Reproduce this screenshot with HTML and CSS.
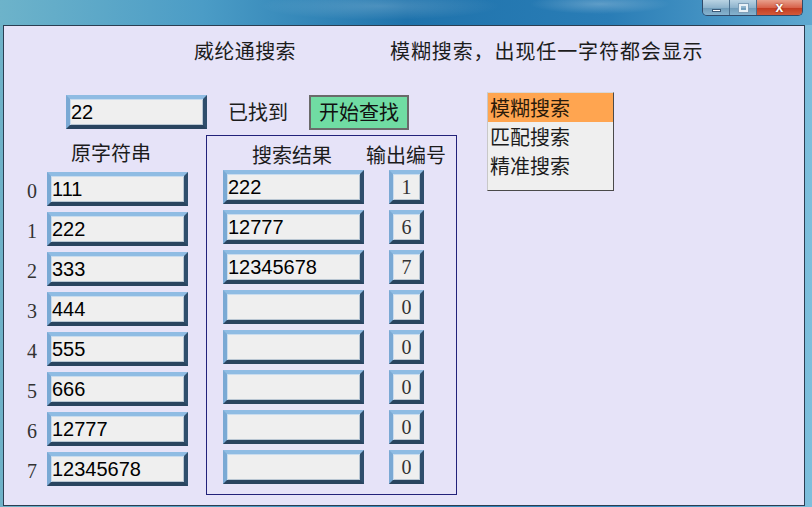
FILE: index.html
```html
<!DOCTYPE html>
<html lang="zh-CN">
<head>
<meta charset="utf-8">
<title>威纶通搜索</title>
<link rel="stylesheet" href="styles.css">
</head>
<body>
<div class="window">
  <div class="titlebar">
    <div class="caption-buttons">
      <span class="cb cb-min"><span class="min-glyph"></span></span>
      <span class="cb cb-max"><span class="max-glyph"></span></span>
      <span class="cb cb-close">x</span>
    </div>
  </div>
  <div class="frame">
    <div class="client">
      <div class="header">
        <span class="title">威纶通搜索</span>
        <span class="hint">模糊搜索，出现任一字符都会显示</span>
      </div>
      <div class="main">
        <div class="left">
          <div class="search-row">
            <div class="bevel field search-field">22</div>
            <span class="found">已找到</span>
            <div class="start-btn">开始查找</div>
          </div>
          <div class="tables">
            <div class="orig">
              <div class="col-head">原字符串</div>
              <div class="orig-rows">
                <div class="orig-row"><span class="idx">0</span><div class="bevel field">111</div></div>
                <div class="orig-row"><span class="idx">1</span><div class="bevel field">222</div></div>
                <div class="orig-row"><span class="idx">2</span><div class="bevel field">333</div></div>
                <div class="orig-row"><span class="idx">3</span><div class="bevel field">444</div></div>
                <div class="orig-row"><span class="idx">4</span><div class="bevel field">555</div></div>
                <div class="orig-row"><span class="idx">5</span><div class="bevel field">666</div></div>
                <div class="orig-row"><span class="idx">6</span><div class="bevel field">12777</div></div>
                <div class="orig-row"><span class="idx">7</span><div class="bevel field">12345678</div></div>
              </div>
            </div>
            <div class="results">
              <div class="res-head"><span class="rh1">搜索结果</span><span class="rh2">输出编号</span></div>
              <div class="res-rows">
                <div class="res-row"><div class="bevel field">222</div><div class="bevel num">1</div></div>
                <div class="res-row"><div class="bevel field">12777</div><div class="bevel num">6</div></div>
                <div class="res-row"><div class="bevel field">12345678</div><div class="bevel num">7</div></div>
                <div class="res-row"><div class="bevel field"></div><div class="bevel num">0</div></div>
                <div class="res-row"><div class="bevel field"></div><div class="bevel num">0</div></div>
                <div class="res-row"><div class="bevel field"></div><div class="bevel num">0</div></div>
                <div class="res-row"><div class="bevel field"></div><div class="bevel num">0</div></div>
                <div class="res-row"><div class="bevel field"></div><div class="bevel num">0</div></div>
              </div>
            </div>
          </div>
        </div>
        <div class="listbox">
          <div class="item selected">模糊搜索</div>
          <div class="item">匹配搜索</div>
          <div class="item">精准搜索</div>
        </div>
      </div>
    </div>
  </div>
</div>
</body>
</html>
```

FILE: styles.css
```css
* { box-sizing: border-box; }
html, body { margin: 0; padding: 0; }
body {
  width: 812px;
  height: 507px;
  overflow: hidden;
  font-family: "Noto Sans CJK SC", "Liberation Sans", sans-serif;
  background: #5aa3cc;
}
.window {
  width: 812px;
  height: 507px;
  display: flex;
  flex-direction: column;
  background: linear-gradient(90deg, #6fb2c8 0%, #4e9cc4 30%, #2c7fb5 55%, #3b8cc0 80%, #7ebfdc 100%);
}
.titlebar {
  height: 25px;
  flex: none;
  display: flex;
  justify-content: flex-end;
  align-items: flex-start;
  padding-right: 9px;
  background:
    radial-gradient(ellipse 120px 14px at 380px 6px, rgba(255,255,255,0.18), transparent),
    radial-gradient(ellipse 70px 10px at 600px 4px, rgba(255,255,255,0.25), transparent),
    linear-gradient(90deg, #6db3ca 0%, #4b9cc6 25%, #1f73ac 50%, #2a7db6 75%, #5ea8d0 100%);
}
.caption-buttons {
  display: flex;
  height: 16px;
  border: 1px solid #2f4a6a;
  border-top: none;
  border-radius: 0 0 5px 5px;
  overflow: hidden;
}
.cb {
  display: flex;
  align-items: center;
  justify-content: center;
  height: 15px;
}
.cb-min, .cb-max {
  width: 27px;
  background: linear-gradient(180deg, #b9d3e3 0%, #8fb4cd 50%, #6f9bb9 51%, #86b3cf 100%);
  border-right: 1px solid #4b6f8e;
}
.min-glyph {
  width: 9px;
  height: 3px;
  margin-top: 5px;
  background: #fff;
  border: 1px solid #3b5a78;
}
.max-glyph {
  width: 9px;
  height: 8px;
  border: 2px solid #e8f1f7;
  outline: 1px solid #7f9fb8;
}
.cb-close {
  width: 45px;
  background: linear-gradient(180deg, #e8a08c 0%, #d8644c 50%, #c23a20 51%, #d35a3a 100%);
  color: #fff;
  font-family: "Liberation Sans", sans-serif;
  font-weight: bold;
  font-size: 14px;
  line-height: 15px;
  text-shadow: 0 0 2px #6a1a0a;
}
.frame {
  flex: 1;
  display: flex;
  padding: 0 7px 1px 3px;
}
.client {
  flex: 1;
  border: 1px solid #2c3e52;
  background: #e6e3f8;
  display: flex;
  flex-direction: column;
  color: #1c1c1c;
}
.header {
  padding: 13px 0 0 190px;
  display: flex;
  font-size: 20px;
  line-height: 24px;
  height: 37px;
}
.title { letter-spacing: 0.4px; }
.hint { margin-left: 94px; letter-spacing: 0.9px; }
.main {
  margin-top: 29px;
  display: flex;
}
.left { width: 466px; }
.search-row {
  margin-top: 2px;
  height: 36px;
  display: flex;
  align-items: center;
}
.bevel {
  background: #efefef;
  border-style: solid;
  border-width: 4px;
  border-color: #8fbce3 #2f4e6c #29445f #7aa9d4;
  box-shadow: inset 1px 1px 0 #c9dcee, inset -1px -1px 0 #b9c6d2;
}
.field {
  width: 141px;
  height: 34px;
  padding-left: 1px;
  font-family: "Liberation Sans", Arial, sans-serif;
  font-size: 20px;
  line-height: 26px;
  color: #000;
}
.search-field { margin-left: 62px; }
.found {
  margin-left: 21px;
  font-size: 20px;
  line-height: 24px;
}
.start-btn {
  margin-left: 21px;
  width: 100px;
  height: 35px;
  background: #70dca3;
  border: 2px solid #6a6a6a;
  font-size: 20px;
  line-height: 30px;
  text-align: center;
  color: #111;
}
.tables {
  margin-top: 5px;
  display: flex;
}
.orig { width: 202px; }
.col-head {
  padding: 6px 0 0 67px;
  font-size: 20px;
  line-height: 24px;
}
.orig-rows {
  margin-top: 7px;
  display: flex;
  flex-direction: column;
  gap: 6px;
}
.orig-row {
  display: flex;
  align-items: center;
  padding-left: 23px;
}
.idx {
  width: 20px;
  font-family: "Liberation Serif", serif;
  font-size: 20px;
  color: #333;
  padding-top: 4px;
}
.results {
  width: 251px;
  height: 360px;
  border: 1px solid #22227a;
}
.res-head {
  padding-top: 7px;
  display: flex;
  font-size: 20px;
  line-height: 24px;
}
.rh1 { margin-left: 45px; }
.rh2 { margin-left: 34px; }
.res-rows {
  margin-top: 3px;
  display: flex;
  flex-direction: column;
  gap: 6px;
}
.res-row {
  display: flex;
  padding-left: 16px;
}
.num {
  margin-left: 25px;
  width: 35px;
  height: 34px;
  font-family: "Liberation Serif", serif;
  font-size: 20px;
  line-height: 26px;
  text-align: center;
  color: #333;
}
.listbox {
  margin-left: 17px;
  width: 127px;
  height: 99px;
  background: #efefef;
  border-style: solid;
  border-width: 1px;
  border-color: #d8d8d8 #4a4a4a #4a4a4a #c8c8c8;
}
.item {
  height: 29px;
  padding-left: 2px;
  font-size: 20px;
  line-height: 29px;
  color: #1c1c1c;
}
.item.selected { background: #ffa550; color: #2a1a0a; }
```
